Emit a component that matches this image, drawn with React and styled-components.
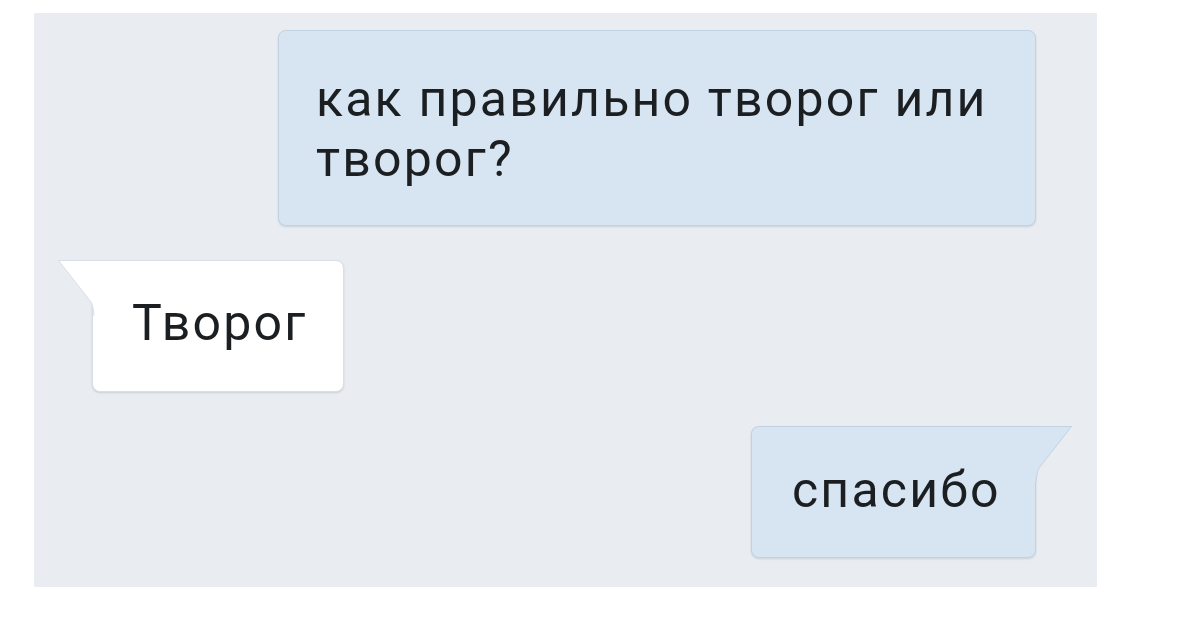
import React from 'react';
import styled, { createGlobalStyle } from 'styled-components';

const GlobalStyle = createGlobalStyle`
  body {
    margin: 0;
    background: #ffffff;
    font-family: Roboto, "Liberation Sans", Arial, sans-serif;
  }
`;

// ============== Page
const Page = styled.div`
  width: 1200px;
  height: 628px;
  padding: 13px 0 0 34px;
  box-sizing: border-box;
`;

const Chat = styled.div`
  width: 1063px;
  height: 574px;
  box-sizing: border-box;
  background-color: #e9edf1;
  padding: 17px 61px 0 58px;
  display: flex;
  flex-direction: column;
  gap: 34px;
`;

// ============== Bubbles
const Bubble = styled.div`
  position: relative;
  align-self: ${(p) => (p.$out ? 'flex-end' : 'flex-start')};
  background-color: ${(p) => (p.$out ? '#d7e5f3' : '#ffffff')};
  border: 1px solid ${(p) => (p.$out ? '#c3d2e2' : '#d9dfe6')};
  border-radius: 8px;
  box-shadow: 0 1px 2px rgba(60, 80, 100, 0.18);
  box-sizing: border-box;
  width: ${(p) => p.$width}px;
  height: ${(p) => p.$height}px;
  padding: ${(p) => p.$pad};
  color: #1c1f22;
  font-size: 50px;
  line-height: 60px;
  letter-spacing: 2.2px;
  ${(p) => (p.$tail === 'left' ? 'border-top-left-radius: 0;' : '')}
  ${(p) => (p.$tail === 'right' ? 'border-top-right-radius: 0;' : '')}
`;

const Tail = styled.svg`
  position: absolute;
  top: -1px;
  ${(p) => (p.$side === 'left' ? 'left: -35px;' : 'right: -37px;')}
  width: 38px;
  height: 56px;
  overflow: visible;
`;

function LeftTail() {
  return (
    <Tail $side="left" viewBox="0 0 38 56">
      <path d="M0.5 0.5 H38 V56 H36 C35.5 50 35 46 33 42 Z" fill="#ffffff" />
      <path d="M38 0.5 H0.5 L33 42 C35 46 35.5 50 36 56" fill="none" stroke="#d9dfe6" strokeWidth="1" />
    </Tail>
  );
}

function RightTail() {
  return (
    <Tail $side="right" viewBox="0 0 38 56">
      <path d="M37.5 0.5 H0 V56 H2 C2.5 50 3 46 5 42 Z" fill="#d7e5f3" />
      <path d="M0 0.5 H37.5 L5 42 C3 46 2.5 50 2 56" fill="none" stroke="#c3d2e2" strokeWidth="1" />
    </Tail>
  );
}

export default function App() {
  return (
    <>
      <GlobalStyle />
      <Page>
        <Chat>
          <Bubble $out $width={758} $height={196} $pad="38px 20px 0 37px">
            как правильно творог или творог?
          </Bubble>
          <Bubble $tail="left" $width={252} $height={132} $pad="32px 10px 0 39px">
            <LeftTail />
            Творог
          </Bubble>
          <Bubble $out $tail="right" $width={285} $height={132} $pad="33px 10px 0 40px">
            <RightTail />
            спасибо
          </Bubble>
        </Chat>
      </Page>
    </>
  );
}
